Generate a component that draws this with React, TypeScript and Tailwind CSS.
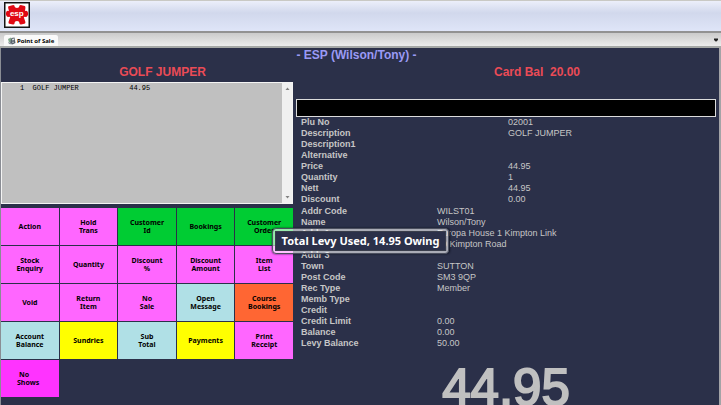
import { clsx } from 'clsx';

type Row = { label: string; value?: string };

const ITEM_ROWS: Row[] = [
    { label: 'Plu No', value: '02001' },
    { label: 'Description', value: 'GOLF JUMPER' },
    { label: 'Description1' },
    { label: 'Alternative' },
    { label: 'Price', value: '44.95' },
    { label: 'Quantity', value: '1' },
    { label: 'Nett', value: '44.95' },
    { label: 'Discount', value: '0.00' },
];

const MEMBER_ROWS: Row[] = [
    { label: 'Addr Code', value: 'WILST01' },
    { label: 'Name', value: 'Wilson/Tony' },
    { label: 'Addr 1', value: 'Europa House 1 Kimpton Link' },
    { label: 'Addr 2', value: '40 Kimpton Road' },
    { label: 'Addr 3' },
    { label: 'Town', value: 'SUTTON' },
    { label: 'Post Code', value: 'SM3 9QP' },
    { label: 'Rec Type', value: 'Member' },
    { label: 'Memb Type' },
    { label: 'Credit' },
    { label: 'Credit Limit', value: '0.00' },
    { label: 'Balance', value: '0.00' },
    { label: 'Levy Balance', value: '50.00' },
];

const PINK = 'bg-[#ff66ff]';
const GREEN = 'bg-[#00cc33]';
const BLUE = 'bg-[#b0e0e6]';
const YELLOW = 'bg-[#ffff00]';
const ORANGE = 'bg-[#ff6633]';
const MAGENTA = 'bg-[#ff33ff]';

const KEYS = [
    { lines: ['Action'], color: PINK },
    { lines: ['Hold', 'Trans'], color: PINK },
    { lines: ['Customer', 'Id'], color: GREEN },
    { lines: ['Bookings'], color: GREEN },
    { lines: ['Customer', 'Order'], color: GREEN },
    { lines: ['Stock', 'Enquiry'], color: PINK },
    { lines: ['Quantity'], color: PINK },
    { lines: ['Discount', '%'], color: PINK },
    { lines: ['Discount', 'Amount'], color: PINK },
    { lines: ['Item', 'List'], color: PINK },
    { lines: ['Void'], color: PINK },
    { lines: ['Return', 'Item'], color: PINK },
    { lines: ['No', 'Sale'], color: PINK },
    { lines: ['Open', 'Message'], color: BLUE },
    { lines: ['Course', 'Bookings'], color: ORANGE },
    { lines: ['Account', 'Balance'], color: BLUE },
    { lines: ['Sundries'], color: YELLOW },
    { lines: ['Sub', 'Total'], color: BLUE },
    { lines: ['Payments'], color: YELLOW },
    { lines: ['Print', 'Receipt'], color: PINK },
    { lines: ['No', 'Shows'], color: MAGENTA, left: true },
];

const Logo = () => (
    <svg viewBox="0 0 26 26" className="h-[26px] w-[26px]" role="img" aria-label="esp">
        <rect x="0.75" y="0.75" width="24.5" height="24.5" fill="#fff" stroke="#151515" strokeWidth="1.5" />
        <path
            d="M4.6 4.3 L9.3 3 Q10.8 3 10.6 4.6 Q10.8 6 13 6 Q15.2 6 15.2 4.6 Q15 3 16.7 3 L20.8 4.1 Q21.6 4.4 21.4 6 L21 9 Q23.9 8 24.1 11.8 Q23.9 15.5 20.8 14.8 L19.8 15.2 L21.4 20 Q21.6 21.4 20.4 21.8 L17 22.6 Q15.2 22.8 15.4 20.8 Q15.4 19 13 19 Q10.6 19 10.6 20.8 Q10.8 22.8 9 22.6 L5.4 21.8 Q4.2 21.4 4.5 20 L6.2 15.2 L5.2 14.8 Q2.1 15.5 1.9 11.8 Q2.1 8 5 9 L4.2 6 Q3.9 4.6 4.6 4.3 Z"
            fill="#e00914"
        />
        <text x="12.8" y="14" textAnchor="middle" fontFamily="Liberation Sans, sans-serif" fontWeight="bold" fontSize="8" fill="#fff">
            esp
        </text>
    </svg>
);

const TabIcon = () => (
    <svg viewBox="0 0 9 8" className="h-[8px] w-[9px]" aria-hidden="true">
        <path d="M1 2 L4 0.5 L5 4 L2 5.5 Z" fill="#7fa98a" />
        <path d="M4.5 1 L7.5 0.5 L8.5 6 L5.5 7.5 L3 6 Z" fill="#59616b" />
        <path d="M5 2 L7 1.5 L7.2 3 L5.3 3.5 Z" fill="#dfe6ea" />
        <path d="M1 5 L4 6 L5 7.5 L2 7 Z" fill="#8c949c" />
        <circle cx="6" cy="5.2" r="0.8" fill="#c7ccd1" />
    </svg>
);

const DetailTable = ({ rows, wide }: { rows: Row[]; wide?: boolean }) => (
    <table className="w-full table-fixed border-collapse text-[9px] leading-[11px] text-[#c6c6c6]">
        <tbody>
            {rows.map((row) => (
                <tr key={row.label}>
                    <th scope="row" className={clsx('pl-[5px] text-left font-bold', wide ? 'w-1/2' : 'w-1/3')}>
                        {row.label}
                    </th>
                    <td className={wide ? 'pl-[2px]' : 'pl-px'}>{row.value}</td>
                </tr>
            ))}
        </tbody>
    </table>
);

const KeyPad = () => (
    <div className="mt-1 grid grid-cols-5 gap-px">
        {KEYS.map(({ lines, color, left }) => (
            <button
                key={lines.join(' ')}
                type="button"
                className={clsx(
                    'flex h-[37px] flex-col justify-center font-["Noto_Sans",sans-serif] text-[7px] leading-[8px] font-bold text-black',
                    left ? 'items-start pl-4' : 'items-center',
                    color,
                )}
            >
                {lines.map((line) => (
                    <span key={line} className={clsx(left && line === 'No' && 'pl-[2px]')}>
                        {line}
                    </span>
                ))}
            </button>
        ))}
    </div>
);

const SaleList = () => (
    <div className="flex h-[122px] border border-[#f4f4f4] bg-[#c0c0c0]">
        <pre className="flex-1 pl-[18px] font-['Liberation_Mono',monospace] text-[7px] leading-[10px] text-black">
            {'1  GOLF JUMPER            44.95'}
        </pre>
        <div className="flex w-[10px] flex-col items-center justify-between bg-[#f0f0f0] py-1">
            <button type="button" aria-label="Scroll up" className="h-[3px] w-[5px]">
                <svg viewBox="0 0 5 3" className="block h-[3px] w-[5px]">
                    <path d="M0.5 3 L2.5 0.5 L4.5 3 Z" fill="#808080" />
                </svg>
            </button>
            <button type="button" aria-label="Scroll down" className="h-[3px] w-[5px]">
                <svg viewBox="0 0 5 3" className="block h-[3px] w-[5px]">
                    <path d="M0.5 0 L2.5 2.5 L4.5 0 Z" fill="#808080" />
                </svg>
            </button>
        </div>
    </div>
);

export default function App() {
    return (
        <div className="relative flex h-screen flex-col overflow-hidden bg-[#2b3049] font-['Liberation_Sans',sans-serif]">
            <header className="h-[31px] shrink-0 border-t border-[#c9c9c4] bg-linear-to-b from-[#eceffa] via-[#d1d8ec] via-40% to-[#dfe5f8] pt-px pl-1">
                <Logo />
            </header>

            <nav className="flex h-[17px] shrink-0 items-end justify-between border-t-2 border-b-2 border-t-[#929292] border-b-[#a5a8a6] bg-linear-to-b from-[#cbcbcb] to-[#ececec] pr-[3px] pl-1">
                <a
                    href="#pos"
                    className="flex h-[11px] items-center gap-px rounded-t-xs bg-[#fafafa] pr-1 pl-[3px] font-['Noto_Sans',sans-serif] text-[6px] leading-[10px] font-bold text-black"
                >
                    <TabIcon />
                    Point of Sale
                </a>
                <button type="button" aria-label="Tab list" className="self-center">
                    <svg viewBox="0 0 4 4" className="block h-[4px] w-[4px]">
                        <path d="M0 0.5 H4 V2 L2 3.8 L0 2 Z" fill="#222" />
                    </svg>
                </button>
            </nav>

            <main className="flex-1 border-r-2 border-l border-r-[#a3a3a6] border-l-[#8a8d94] pr-[3px]">
                <h1 className="pr-1 text-center text-[12px] leading-[14px] font-bold text-[#9a9af5]">
                    - ESP (Wilson/Tony) -
                </h1>

                <div className="grid grid-cols-[292fr_420fr] gap-x-[3px]">
                    <section>
                        <h2 className="mt-[3px] mb-[3px] pl-[31px] text-center text-[12px] leading-[14px] font-bold text-[#ea4b56]">
                            GOLF JUMPER
                        </h2>
                        <SaleList />
                        <KeyPad />
                    </section>

                    <section>
                        <h2 className="mt-[3px] pl-[62px] text-center text-[12px] leading-[14px] font-bold whitespace-pre text-[#ea4b56]">
                            {'Card Bal  20.00'}
                        </h2>
                        <input
                            type="text"
                            aria-label="Plu entry"
                            className="mt-5 block h-[18px] w-full border border-[#dcdcdc] bg-black px-1 text-[9px] text-white outline-none"
                        />
                        <DetailTable rows={ITEM_ROWS} wide />
                        <div className="mt-px">
                            <DetailTable rows={MEMBER_ROWS} />
                        </div>
                        <p className="mt-[13px] text-center text-[51px] leading-[52px] text-[#c0c0c0] [-webkit-text-stroke:2px_#c0c0c0]">
                            44.95
                        </p>
                    </section>
                </div>
            </main>

            <div
                role="status"
                className="absolute top-[228px] left-1/2 -translate-x-1/2 rounded-sm border border-[#4b4f5e] bg-white/60 p-[2px] shadow-[0_0_2px_#10131f]"
            >
                <div className="border border-[#3a3e4c] bg-[#2b3049] px-[6px] font-['Noto_Sans',sans-serif] text-[11px] leading-[18px] font-bold whitespace-nowrap text-white">
                    Total Levy Used, 14.95 Owing
                </div>
            </div>
        </div>
    );
}
